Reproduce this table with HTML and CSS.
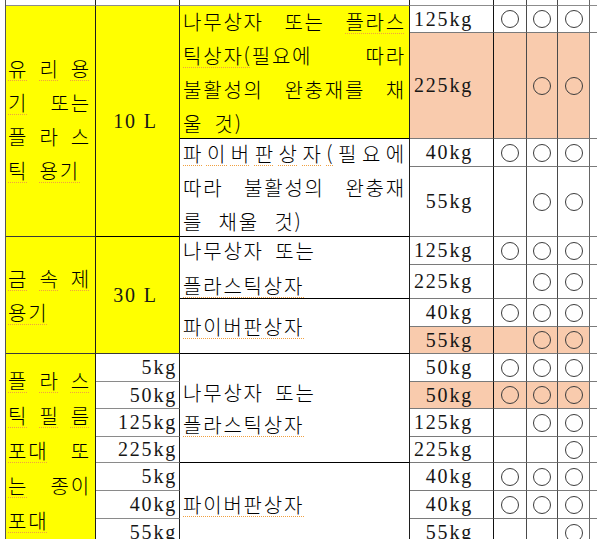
FILE: index.html
```html
<!DOCTYPE html>
<html lang="ko">
<head>
<meta charset="utf-8">
<title>용기 표</title>
<link rel="stylesheet" href="styles.css">
</head>
<body>
<div class="sheet">
  <!-- stub of previous row -->
  <div class="c st"></div><div class="c st"></div><div class="c st"></div><div class="c st"></div>
  <div class="c st mk"></div><div class="c st mk"></div><div class="c st mk7"></div><div class="c st x"></div>

  <!-- R1 -->
  <div class="c c1 y rs4 b1">
    <div class="ln"><span class="sp">유</span><span class="sp">리</span><span class="sp">용</span></div>
    <div class="ln"><span class="sp">기</span><span>또는</span></div>
    <div class="ln"><span>플</span><span>라</span><span>스</span></div>
    <div class="ln l"><span class="sp">틱</span>&nbsp;<span class="sp">용기</span></div>
  </div>
  <div class="c c2 y rs4 blk"><span class="num">10 L</span></div>
  <div class="c desc y rs2 blk">
    <div class="ln"><span>나무상자</span><span>또는</span><span class="sp">플라스</span></div>
    <div class="ln"><span><span class="sp">틱상자(</span>필요에</span><span>따라</span></div>
    <div class="ln"><span>불활성의</span><span>완충재를</span><span>채</span></div>
    <div class="ln l">울 것)</div>
  </div>
  <div class="c wt"><span class="num">125kg</span></div>
  <div class="c mk"><i class="o"></i></div><div class="c mk"><i class="o"></i></div><div class="c mk7"><i class="o"></i></div><div class="c x"></div>

  <!-- R2 -->
  <div class="c wt s"><span class="num">225kg</span></div>
  <div class="c mk s"></div><div class="c mk s"><i class="o"></i></div><div class="c mk7 s"><i class="o"></i></div><div class="c x"></div>

  <!-- R3 -->
  <div class="c desc rs2 blk">
    <div class="ln"><span class="sp">파</span><span class="sp">이</span><span class="sp">버</span><span class="sp">판</span><span class="sp">상</span><span class="sp">자</span><span class="sp">(</span><span>필</span><span>요</span><span>에</span></div>
    <div class="ln"><span>따라</span><span>불활성의</span><span>완충재</span></div>
    <div class="ln l wide">를 채울 것)</div>
  </div>
  <div class="c wt"><span class="num">40kg</span></div>
  <div class="c mk"><i class="o"></i></div><div class="c mk"><i class="o"></i></div><div class="c mk7"><i class="o"></i></div><div class="c x"></div>

  <!-- R4 -->
  <div class="c wt"><span class="num">55kg</span></div>
  <div class="c mk"></div><div class="c mk"><i class="o"></i></div><div class="c mk7"><i class="o"></i></div><div class="c x"></div>

  <!-- R5 -->
  <div class="c c1 y rs4">
    <div class="ln"><span class="sp">금</span><span class="sp">속</span><span class="sp">제</span></div>
    <div class="ln l"><span class="sp">용기</span></div>
  </div>
  <div class="c c2 y rs4 blk2"><span class="num">30 L</span></div>
  <div class="c desc rs2 blk">
    <div class="ln l tall">나무상자 또는</div>
    <div class="ln l tall"><span class="sp">플라스틱상자</span></div>
  </div>
  <div class="c wt"><span class="num">125kg</span></div>
  <div class="c mk"><i class="o"></i></div><div class="c mk"><i class="o"></i></div><div class="c mk7"><i class="o"></i></div><div class="c x"></div>

  <!-- R6 -->
  <div class="c wt"><span class="num">225kg</span></div>
  <div class="c mk"></div><div class="c mk"><i class="o"></i></div><div class="c mk7"><i class="o"></i></div><div class="c x"></div>

  <!-- R7 -->
  <div class="c desc rs2 blk">
    <div class="ln l"><span class="sp">파이버판상자</span></div>
  </div>
  <div class="c wt"><span class="num">40kg</span></div>
  <div class="c mk"><i class="o"></i></div><div class="c mk"><i class="o"></i></div><div class="c mk7"><i class="o"></i></div><div class="c x"></div>

  <!-- R8 -->
  <div class="c wt s"><span class="num">55kg</span></div>
  <div class="c mk s"></div><div class="c mk s"><i class="o"></i></div><div class="c mk7 s"><i class="o"></i></div><div class="c x"></div>

  <!-- R9 -->
  <div class="c c1 y rs7">
    <div class="ln t35"><span class="sp">플</span><span class="sp">라</span><span class="sp">스</span></div>
    <div class="ln t35"><span class="sp">틱</span><span class="sp">필</span><span class="sp">름</span></div>
    <div class="ln t35"><span class="sp">포대</span><span>또</span></div>
    <div class="ln t35"><span class="sp">는</span><span>종이</span></div>
    <div class="ln l t35"><span class="sp">포대</span></div>
  </div>
  <div class="c wt2"><span class="num">5kg</span></div>
  <div class="c desc rs4 blk">
    <div class="ln l short">나무상자 또는</div>
    <div class="ln l short"><span class="sp">플라스틱상자</span></div>
  </div>
  <div class="c wt"><span class="num">50kg</span></div>
  <div class="c mk"><i class="o"></i></div><div class="c mk"><i class="o"></i></div><div class="c mk7"><i class="o"></i></div><div class="c x"></div>

  <!-- R10 -->
  <div class="c wt2"><span class="num">50kg</span></div>
  <div class="c wt s"><span class="num">50kg</span></div>
  <div class="c mk s"><i class="o"></i></div><div class="c mk s"><i class="o"></i></div><div class="c mk7 s"><i class="o"></i></div><div class="c x"></div>

  <!-- R11 -->
  <div class="c wt2"><span class="num">125kg</span></div>
  <div class="c wt"><span class="num">125kg</span></div>
  <div class="c mk"></div><div class="c mk"><i class="o"></i></div><div class="c mk7"><i class="o"></i></div><div class="c x"></div>

  <!-- R12 -->
  <div class="c wt2 blk2"><span class="num">225kg</span></div>
  <div class="c wt"><span class="num">225kg</span></div>
  <div class="c mk"></div><div class="c mk"></div><div class="c mk7"><i class="o"></i></div><div class="c x"></div>

  <!-- R13 -->
  <div class="c wt2"><span class="num">5kg</span></div>
  <div class="c desc rs3 blk">
    <div class="ln l"><span class="sp">파이버판상자</span></div>
  </div>
  <div class="c wt"><span class="num">40kg</span></div>
  <div class="c mk"><i class="o"></i></div><div class="c mk"><i class="o"></i></div><div class="c mk7"><i class="o"></i></div><div class="c x"></div>

  <!-- R14 -->
  <div class="c wt2"><span class="num">40kg</span></div>
  <div class="c wt"><span class="num">40kg</span></div>
  <div class="c mk"><i class="o"></i></div><div class="c mk"><i class="o"></i></div><div class="c mk7"><i class="o"></i></div><div class="c x"></div>

  <!-- R15 -->
  <div class="c wt2"><span class="num">55kg</span></div>
  <div class="c wt"><span class="num">55kg</span></div>
  <div class="c mk"></div><div class="c mk"></div><div class="c mk7"><i class="o"></i></div><div class="c x"></div>
</div>
</body>
</html>
```

FILE: styles.css
```css
html, body {
  margin: 0;
  padding: 0;
  overflow: hidden;
  background: #fff;
}

body {
  font-family: "Noto Sans CJK KR", "Noto Sans", sans-serif;
  font-size: 20px;
  font-weight: 300;
  color: #000;
  letter-spacing: 1.8px;
  word-spacing: 4px;
}

.sheet {
  display: grid;
  grid-template-columns: 90px 84px 230px 84px 33px 31px 32px 40px;
  grid-template-rows: 6px 27px 106px 28px 70px 28px 34px 28px 27px 28px 27px 28px 26px 28px 28px 28px;
  width: max-content;
  margin-left: 5px;
  border-left: 1px solid #555;
}

.c {
  box-sizing: border-box;
  display: flex;
  align-items: center;
  min-width: 0;
  border-right: 1px solid #1e1e1e;
  border-bottom: 1px solid #7a7a7a;
  white-space: nowrap;
}

.st { border-bottom-color: #8c8c8c; }

.rs2 { grid-row: span 2; }
.rs3 { grid-row: span 3; }
.rs4 { grid-row: span 4; }
.rs7 { grid-row: span 7; }

.y { background: #ffff00; }
.s { background: #f9cbad; }

.blk { border-bottom-color: #000; }
.blk2 { border-bottom-color: #3a3a3a; }

/* column 1: container type, distributed text */
.c1 {
  flex-direction: column;
  align-items: stretch;
  justify-content: center;
  padding: 0 4px 0 2px;
  border-bottom-color: #3a3a3a;
}
.b1 { padding-bottom: 4px; }

/* column 2: capacity */
.c2 { justify-content: center; padding-right: 4px; }

/* column 3: description */
.desc {
  flex-direction: column;
  align-items: stretch;
  justify-content: center;
  padding: 0 3px;
}

.ln {
  display: flex;
  justify-content: space-between;
  align-items: center;
  height: 34px;
  flex: none;
}
.ln.l { justify-content: flex-start; }
.ln.tall { height: 35px; }
.ln.t35 { height: 35px; }
.ln.short { height: 32px; }
.ln.wide { word-spacing: 8px; }

.num {
  font-family: "Liberation Serif", "Times New Roman", serif;
  font-size: 20px;
  font-weight: 400;
  letter-spacing: 1.8px;
  word-spacing: 0;
  color: #161616;
}

.wt {
  justify-content: flex-end;
  padding-right: 20px;
  border-right-color: #111;
}
.wt2 {
  justify-content: flex-end;
  padding-right: 2px;
  border-bottom-color: #8a8a8a;
}

.mk {
  justify-content: center;
  border-right-color: #4a4a4a;
}
.mk7 {
  justify-content: center;
  border-right-color: #666;
}
.x { border-right: none; }

.o {
  display: block;
  box-sizing: border-box;
  width: 18px;
  height: 18px;
  border: 1px solid #3c3c3c;
  border-radius: 50%;
}

.sp {
  text-decoration: underline dotted #f0a040;
  text-decoration-thickness: 1px;
  text-underline-offset: 3px;
}
```
